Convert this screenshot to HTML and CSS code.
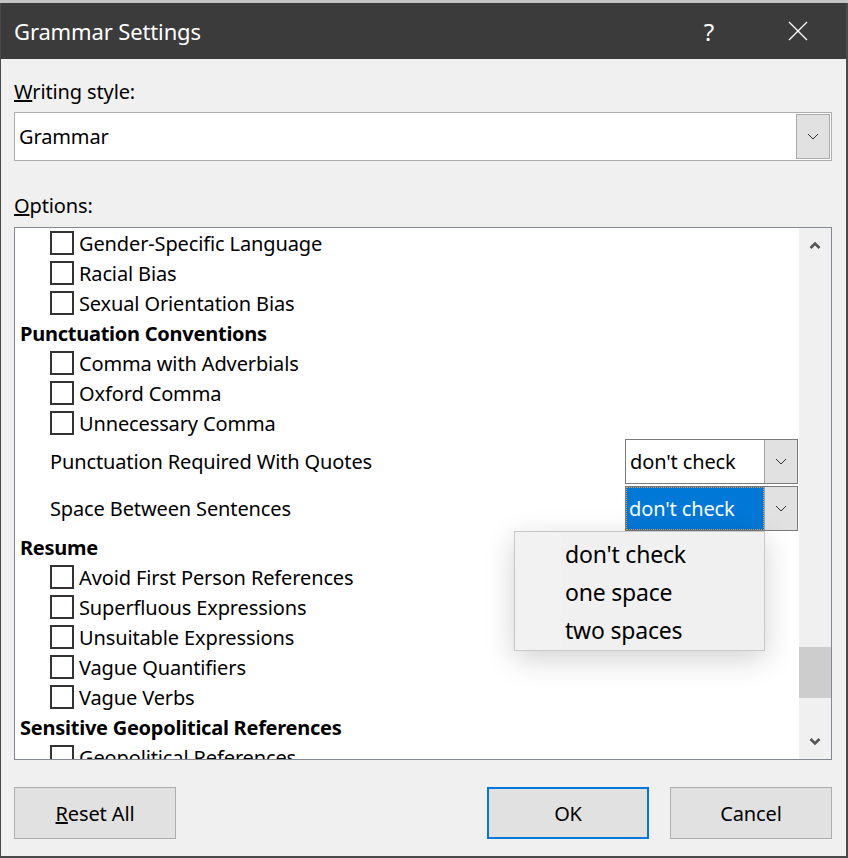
FILE: index.html
```html
<!DOCTYPE html>
<html lang="en">
<head>
    <meta charset="UTF-8">
    <title>Grammar Settings</title>
    <link rel="stylesheet" href="styles.css">
</head>
<body>
    <div class="top-strip"></div>
    <div class="dialog">
        <div class="titlebar">
            <span class="title">Grammar Settings</span>
            <span class="help">?</span>
            <span class="close">
                <svg width="20" height="20" viewBox="0 0 20 20"><path d="M1 1 L19 19 M19 1 L1 19" stroke="#fff" stroke-width="1.4" fill="none"/></svg>
            </span>
        </div>
        <div class="content">
            <div class="field-label"><u>W</u>riting style:</div>
            <div class="combo combo-big">
                <span class="combo-text">Grammar</span>
                <span class="combo-button">
                    <svg width="12" height="7" viewBox="0 0 12 7"><path d="M1 1 L6 6 L11 1" stroke="#333" stroke-width="1" fill="none"/></svg>
                </span>
            </div>
            <div class="field-label options-label"><u>O</u>ptions:</div>
            <div class="options">
                <div class="list">
                    <div class="row"><span class="check"></span>Gender-Specific Language</div>
                    <div class="row"><span class="check"></span>Racial Bias</div>
                    <div class="row"><span class="check"></span>Sexual Orientation Bias</div>
                    <div class="row group">Punctuation Conventions</div>
                    <div class="row"><span class="check"></span>Comma with Adverbials</div>
                    <div class="row"><span class="check"></span>Oxford Comma</div>
                    <div class="row"><span class="check"></span>Unnecessary Comma</div>
                    <div class="row select-row">
                        <span class="select-label">Punctuation Required With Quotes</span>
                        <div class="combo combo-small">
                            <span class="combo-text">don't check</span>
                            <span class="combo-button">
                                <svg width="12" height="7" viewBox="0 0 12 7"><path d="M1 1 L6 6 L11 1" stroke="#333" stroke-width="1" fill="none"/></svg>
                            </span>
                        </div>
                    </div>
                    <div class="row select-row">
                        <span class="select-label">Space Between Sentences</span>
                        <div class="combo combo-small focused">
                            <span class="combo-text">don't check</span>
                            <span class="combo-button">
                                <svg width="12" height="7" viewBox="0 0 12 7"><path d="M1 1 L6 6 L11 1" stroke="#333" stroke-width="1" fill="none"/></svg>
                            </span>
                        </div>
                    </div>
                    <div class="row group">Resume</div>
                    <div class="row"><span class="check"></span>Avoid First Person References</div>
                    <div class="row"><span class="check"></span>Superfluous Expressions</div>
                    <div class="row"><span class="check"></span>Unsuitable Expressions</div>
                    <div class="row"><span class="check"></span>Vague Quantifiers</div>
                    <div class="row"><span class="check"></span>Vague Verbs</div>
                    <div class="row group">Sensitive Geopolitical References</div>
                    <div class="row"><span class="check"></span>Geopolitical References</div>
                </div>
                <div class="scrollbar">
                    <span class="arrow">
                        <svg width="12" height="8" viewBox="0 0 12 8"><path d="M1.5 7 L6 2.5 L10.5 7" stroke="#555" stroke-width="2.6" fill="none"/></svg>
                    </span>
                    <span class="thumb"></span>
                    <span class="arrow arrow-down">
                        <svg width="12" height="8" viewBox="0 0 12 8"><path d="M1.5 1 L6 5.5 L10.5 1" stroke="#555" stroke-width="2.6" fill="none"/></svg>
                    </span>
                </div>
                <div class="popup">
                    <div class="popup-item">don't check</div>
                    <div class="popup-item">one space</div>
                    <div class="popup-item">two spaces</div>
                </div>
            </div>
            <div class="buttons">
                <button class="button"><u>R</u>eset All</button>
                <span class="spacer"></span>
                <button class="button default">OK</button>
                <button class="button">Cancel</button>
            </div>
        </div>
    </div>
</body>
</html>
```

FILE: styles.css
```css
body {
    margin: 0;
    padding: 0;
    width: 848px;
    height: 858px;
    overflow: hidden;
    background: #c8c8c8;
    font-family: 'Noto Sans', 'Open Sans', sans-serif;
    font-size: 20px;
    letter-spacing: -0.13px;
    color: #000;
}
.top-strip {
    height: 3px;
    background: #c4c4c4;
}
.dialog {
    width: 845px;
    height: 853px;
    border-left: 1px solid #4a4a4a;
    border-right: 2px solid #4a4a4a;
    border-bottom: 2px solid #4a4a4a;
    background: #f0f0f0;
    display: flex;
    flex-direction: column;
}
.titlebar {
    height: 56px;
    background: #3b3b3b;
    color: #fff;
    display: flex;
    align-items: center;
    flex-shrink: 0;
}
.title {
    font-size: 22px;
    margin-left: 13px;
    flex: 1;
}
.help {
    font-size: 24px;
    width: 24px;
    text-align: center;
    margin-right: 67px;
}
.close {
    display: flex;
    margin-right: 38px;
}
.content {
    flex: 1;
    display: flex;
    flex-direction: column;
    padding: 18px 14px 0 13px;
}
.field-label {
    height: 30px;
    line-height: 30px;
}
.combo {
    display: flex;
    background: #fff;
    border: 1px solid #7a7a7a;
    box-sizing: border-box;
}
.combo-big {
    margin-top: 5px;
    height: 49px;
    border-color: #adadad;
}
.options-label {
    margin-top: 30px;
}
.combo-text {
    flex: 1;
    display: flex;
    align-items: center;
    padding-left: 4px;
}
.combo-button {
    width: 33px;
    background: #e1e1e1;
    border: 1px solid #a8a8a8;
    box-sizing: border-box;
    display: flex;
    align-items: center;
    justify-content: center;
}
.combo-big .combo-button {
    margin: 1px;
    width: 34px;
}
.options {
    margin-top: 6px;
    height: 533px;
    border: 1px solid #828790;
    box-sizing: border-box;
    background: #fff;
    display: flex;
    position: relative;
}
.list {
    flex: 1;
    overflow: hidden;
}
.row {
    height: 30px;
    display: flex;
    align-items: center;
    padding-left: 35px;
    white-space: nowrap;
}
.check {
    width: 24px;
    height: 24px;
    border: 2px solid #333;
    box-sizing: border-box;
    margin-right: 5px;
    flex-shrink: 0;
}
.group {
    padding-left: 5px;
    font-weight: bold;
    letter-spacing: -0.25px;
}
.select-row {
    height: 47px;
    padding-right: 1px;
}
.select-label {
    flex: 1;
}
.combo-small {
    width: 173px;
    height: 45px;
}
.combo-small .combo-button {
    border-width: 0 0 0 1px;
    border-color: #a0a0a0;
}
.focused .combo-text {
    background: #0078d7;
    color: #fff;
    outline: 1px dotted #e0a050;
    outline-offset: -1px;
    padding-left: 3px;
}
.scrollbar {
    width: 32px;
    background: #f0f0f0;
    display: flex;
    flex-direction: column;
    align-items: stretch;
}
.arrow {
    height: 34px;
    display: flex;
    align-items: center;
    justify-content: center;
}
.thumb {
    height: 51px;
    margin-top: 385px;
    background: #cdcdcd;
}
.arrow-down {
    margin-top: auto;
}
.popup {
    position: absolute;
    left: 499px;
    top: 303px;
    width: 251px;
    height: 120px;
    box-sizing: border-box;
    border: 1px solid #c8c8c8;
    background: linear-gradient(to right, #f2f2f2 46px, #f0f0f0 46px);
    box-shadow: 0 8px 28px rgba(0, 0, 0, 0.18);
    padding-top: 3px;
}
.popup-item {
    height: 38px;
    line-height: 38px;
    padding-left: 50px;
    font-size: 23px;
    letter-spacing: -0.2px;
}
.buttons {
    margin-top: 27px;
    display: flex;
    gap: 21px;
}
.spacer {
    flex: 1;
}
.button {
    width: 162px;
    height: 52px;
    background: #e1e1e1;
    border: 1px solid #adadad;
    font-family: 'Noto Sans', 'Open Sans', sans-serif;
    font-size: 20px;
    letter-spacing: -0.13px;
    color: #000;
    padding: 0;
}
.button.default {
    border: 2px solid #0078d7;
}
```
